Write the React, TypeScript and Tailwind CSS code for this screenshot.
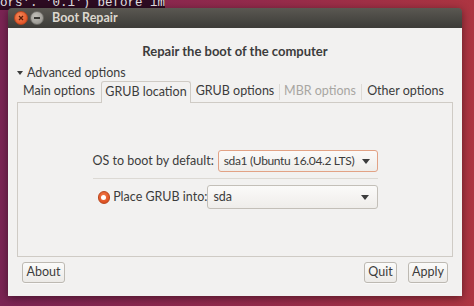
const ui = { fontFamily: 'Lato, "Noto Sans", sans-serif' };

function Arrow() {
  return (
    <svg width="8" height="5" viewBox="0 0 8 5" className="shrink-0">
      <path d="M0 0 L8 0 L4 5 Z" fill="#3c3c3c" />
    </svg>
  );
}

function TitleButtons() {
  return (
    <div className="flex items-center gap-[2px] pl-[6px]">
      <div className="flex h-[14px] w-[14px] items-center justify-center rounded-full border border-[#b5461f] bg-[radial-gradient(circle_at_40%_35%,#f58a5a,#e4572a_70%)]">
        <svg width="6" height="6" viewBox="0 0 6 6">
          <path d="M1 1 L5 5 M5 1 L1 5" stroke="#5a1c08" strokeWidth="1.3" />
        </svg>
      </div>
      <div className="flex h-[14px] w-[14px] items-center justify-center rounded-full border border-[#6d6b66] bg-[radial-gradient(circle_at_40%_35%,#c2c0ba,#9d9b95_70%)]">
        <div className="h-[1.5px] w-[6px] bg-[#3a3935]" />
      </div>
    </div>
  );
}

const tabs = [
  { label: "Main options", w: "w-[84px]" },
  { label: "GRUB location", w: "w-[90px]", active: true },
  { label: "GRUB options", w: "w-[88px]" },
  { label: "MBR options", w: "w-[82px]", disabled: true },
  { label: "Other options", w: "w-[89px]" },
];

function Tabs() {
  return (
    <div className="flex h-[21px] items-end">
      {tabs.map((t, i) => (
        <div
          key={t.label}
          className={
            "relative flex items-center justify-center whitespace-nowrap " +
            t.w +
            (t.active
              ? " z-10 -mb-px h-[22px] rounded-t-[3px] border border-b-0 border-[#cfcbc5] bg-[#f2f1f0] text-[#3c3c3c]"
              : t.disabled
              ? " h-[21px] text-[#a8a6a2]"
              : " h-[21px] text-[#3c3c3c]")
          }
        >
          {i > 2 && <div className="absolute left-0 top-[3px] h-[16px] w-px bg-[#dedbd6]" />}
          <span className="text-[12.5px] leading-none">{t.label}</span>
        </div>
      ))}
    </div>
  );
}

function Button({ label, w }: { label: string; w: string }) {
  return (
    <div
      className={
        "flex h-[21px] items-center justify-center rounded-[3px] border border-[#bdb9b2] bg-gradient-to-b from-[#fbfbfa] to-[#eceae7] text-[12.5px] text-[#3c3c3c] shadow-[0_1px_0_rgba(255,255,255,0.6)] " +
        w
      }
    >
      {label}
    </div>
  );
}

export default function App() {
  return (
    <div
      className="relative h-[306px] w-[474px] overflow-hidden bg-[linear-gradient(90deg,#7b2454,#952b4c_55%,#ad3541)]"
      style={ui}
    >
      {/* terminal window behind */}
      <div className="absolute left-0 top-0 h-[10px] w-[165px] overflow-hidden bg-[#2d0c22]">
        <div
          className="-mt-[4px] whitespace-nowrap text-[12.5px] leading-[14px] text-[#e8e4e6]"
          style={{ fontFamily: '"Liberation Mono", monospace' }}
        >
          ors'. '0.1') before im
        </div>
      </div>

      {/* Boot Repair window */}
      <div className="absolute left-[8px] top-[8px] flex h-[288px] w-[454px] flex-col overflow-hidden rounded-t-[4px] shadow-[0_2px_8px_rgba(0,0,0,0.45)]">
        <div className="flex h-[20px] shrink-0 items-center bg-gradient-to-b from-[#5a5852] to-[#3d3c38]">
          <TitleButtons />
          <span className="ml-[8px] text-[12.5px] font-bold text-[#dcd8cf]">Boot Repair</span>
        </div>

        <div className="flex flex-1 flex-col bg-[#f2f1f0] px-[9px] text-[#3c3c3c]">
          <div className="mt-[16px] h-[14px] text-center text-[13px] font-bold leading-[14px]">
            Repair the boot of the computer
          </div>

          <div className="mt-[8px] flex h-[14px] items-center leading-[14px]">
            <svg width="6" height="6" viewBox="0 0 6 6" className="mr-[4px]">
              <path d="M0 1 L6 1 L3 5 Z" fill="#3c3c3c" />
            </svg>
            <span className="text-[12.5px]">Advanced options</span>
          </div>

          <div className="mt-[1px]">
            <Tabs />
          </div>

          <div className="flex h-[155px] justify-center border border-[#cfcbc5] bg-[#f2f1f0]">
            <div className="mt-[47px] flex w-[285px] flex-col text-[12.5px]">
              <div className="flex h-[22px] items-center">
                <span className="flex-1 whitespace-nowrap pr-[4px] text-right">OS to boot by default:</span>
                <div className="flex h-[22px] w-[164px] items-center justify-between rounded-[3px] border border-[#e2a285] bg-gradient-to-b from-[#fbfaf9] to-[#efedea] pl-[5px] pr-[7px]">
                  <span className="whitespace-nowrap text-[12px] tracking-[-0.35px]">sda1 (Ubuntu 16.04.2 LTS)</span>
                  <Arrow />
                </div>
              </div>

              <div className="mt-[6px] h-px bg-[#dcd9d4]" />

              <div className="mt-[6px] flex h-[24px] items-center">
                <div className="ml-[5px] flex h-[13px] w-[13px] items-center justify-center rounded-full border border-[#b9481f] bg-[radial-gradient(circle_at_45%_35%,#f27a4a,#dd4f20_75%)]">
                  <div className="h-[5px] w-[5px] rounded-full bg-white" />
                </div>
                <span className="flex-1 whitespace-nowrap pl-[3px]">Place GRUB into:</span>
                <div className="flex h-[24px] w-[175px] items-center justify-between rounded-[3px] border border-[#c3bfb8] bg-gradient-to-b from-[#fbfaf9] to-[#efedea] pl-[5px] pr-[8px]">
                  <span>sda</span>
                  <Arrow />
                </div>
              </div>
            </div>
          </div>

          <div className="mt-[5px] flex items-center px-[5px]">
            <Button label="About" w="w-[43px]" />
            <div className="flex-1" />
            <Button label="Quit" w="w-[33px]" />
            <div className="w-[11px]" />
            <Button label="Apply" w="w-[40px]" />
          </div>
        </div>
      </div>
    </div>
  );
}
